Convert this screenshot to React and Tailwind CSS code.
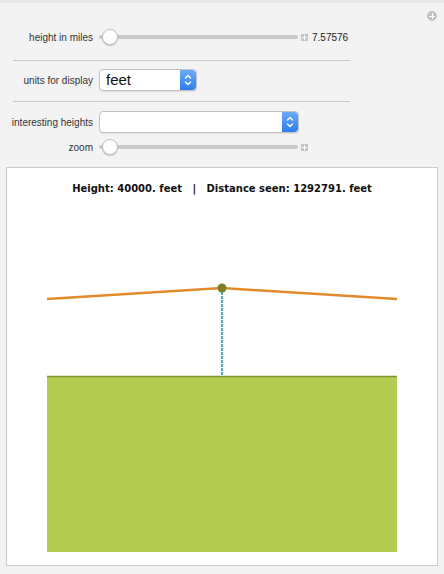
import React from 'react';

const label = "w-[99px] pr-[6px] text-right text-[10px] text-[#333] font-['Liberation_Sans',Arial,sans-serif] whitespace-nowrap";

function PlusBox() {
  return (
    <div className="w-[7px] h-[7px] bg-[#c4c4c4] relative shrink-0">
      <div className="absolute left-[1px] top-[3px] w-[5px] h-px bg-white" />
      <div className="absolute left-[3px] top-[1px] w-px h-[5px] bg-white" />
    </div>
  );
}

function Slider({ value }) {
  return (
    <div className="flex items-center">
      <div className="relative w-[199px] h-5 flex items-center">
        <div className="w-full h-[4px] rounded-full bg-[#c9c9c9]" />
        <div className="absolute left-[3px] top-[2px] w-[16px] h-[16px] rounded-full bg-white border border-[#c2c2c2] shadow-[0_1px_1px_rgba(0,0,0,0.2)]" />
      </div>
      <div className="ml-[3px]"><PlusBox /></div>
      {value && (
        <span className="ml-[4px] text-[10px] text-[#222] font-['Liberation_Sans',Arial,sans-serif]">{value}</span>
      )}
    </div>
  );
}

function Stepper() {
  return (
    <div className="w-[16px] h-full rounded-r-[4px] bg-gradient-to-b from-[#6aaaf8] to-[#2f7ceb] flex items-center justify-center">
      <svg width="8" height="14" viewBox="0 0 8 14" fill="none" stroke="white" strokeWidth="1.3" strokeLinecap="round" strokeLinejoin="round">
        <path d="M1.5 5 L4 2.5 L6.5 5" />
        <path d="M1.5 9 L4 11.5 L6.5 9" />
      </svg>
    </div>
  );
}

function Select({ width, text }) {
  return (
    <div className={`h-[22px] ${width} flex bg-white border border-[#c3c3c3] rounded-[4px] shadow-[0_1px_1px_rgba(0,0,0,0.08)]`}>
      <div className="flex-1 flex items-center pl-[6px] text-[15px] text-[#111] font-['Liberation_Sans',Arial,sans-serif]">{text}</div>
      <Stepper />
    </div>
  );
}

export default function App() {
  return (
    <div className="relative w-[444px] h-[574px] bg-[#f3f3f3] border-t-[3px] border-[#e8e8e8] overflow-hidden">
      <div className="absolute right-[7px] top-[8px] w-[10px] h-[10px] rounded-full bg-[#c2c2c2] flex items-center justify-center">
        <div className="relative w-[6px] h-[6px]">
          <div className="absolute left-0 top-[2.5px] w-[6px] h-px bg-white" />
          <div className="absolute left-[2.5px] top-0 w-px h-[6px] bg-white" />
        </div>
      </div>

      <div className="pt-[24px]">
        <div className="flex items-center h-5">
          <div className={label}>height in miles</div>
          <Slider value="7.57576" />
        </div>
        <div className="mt-[13px] ml-[13px] w-[337px] h-px bg-[#c9c9c9]" />
        <div className="flex items-center mt-[8px] h-[22px]">
          <div className={label}>units for display</div>
          <Select width="w-[98px]" text="feet" />
        </div>
        <div className="mt-[10px] ml-[13px] w-[337px] h-px bg-[#c9c9c9]" />
        <div className="flex items-center mt-[9px] h-[22px]">
          <div className={label}>interesting heights</div>
          <Select width="w-[200px]" text="" />
        </div>
        <div className="flex items-center mt-[4px] h-5">
          <div className={label}>zoom</div>
          <Slider />
        </div>

        <div className="mt-[10px] ml-[6px] w-[432px] h-[399px] bg-white border border-[#cbcbcb]">
          <div className="pt-[14px] h-[28px] text-center text-[10px] leading-[14px] font-bold text-[#111] font-['DejaVu_Sans',Verdana,sans-serif] whitespace-pre">
            {'Height: 40000. feet   |   Distance seen: 1292791. feet'}
          </div>
          <svg width="430" height="369" viewBox="0 0 430 369" className="block">
            <rect x="40" y="180" width="350" height="176" fill="#b4cc4f" />
            <line x1="40" y1="180.5" x2="390" y2="180.5" stroke="#7d9535" strokeWidth="1.5" />
            <line x1="215" y1="92" x2="215" y2="180" stroke="#4ea5c2" strokeWidth="2" strokeDasharray="3 1" />
            <polyline points="40,103 215,92 390,103" fill="none" stroke="#e08a2c" strokeWidth="2.5" />
            <circle cx="215" cy="92" r="4.5" fill="#7b7e22" />
          </svg>
        </div>
      </div>
    </div>
  );
}
